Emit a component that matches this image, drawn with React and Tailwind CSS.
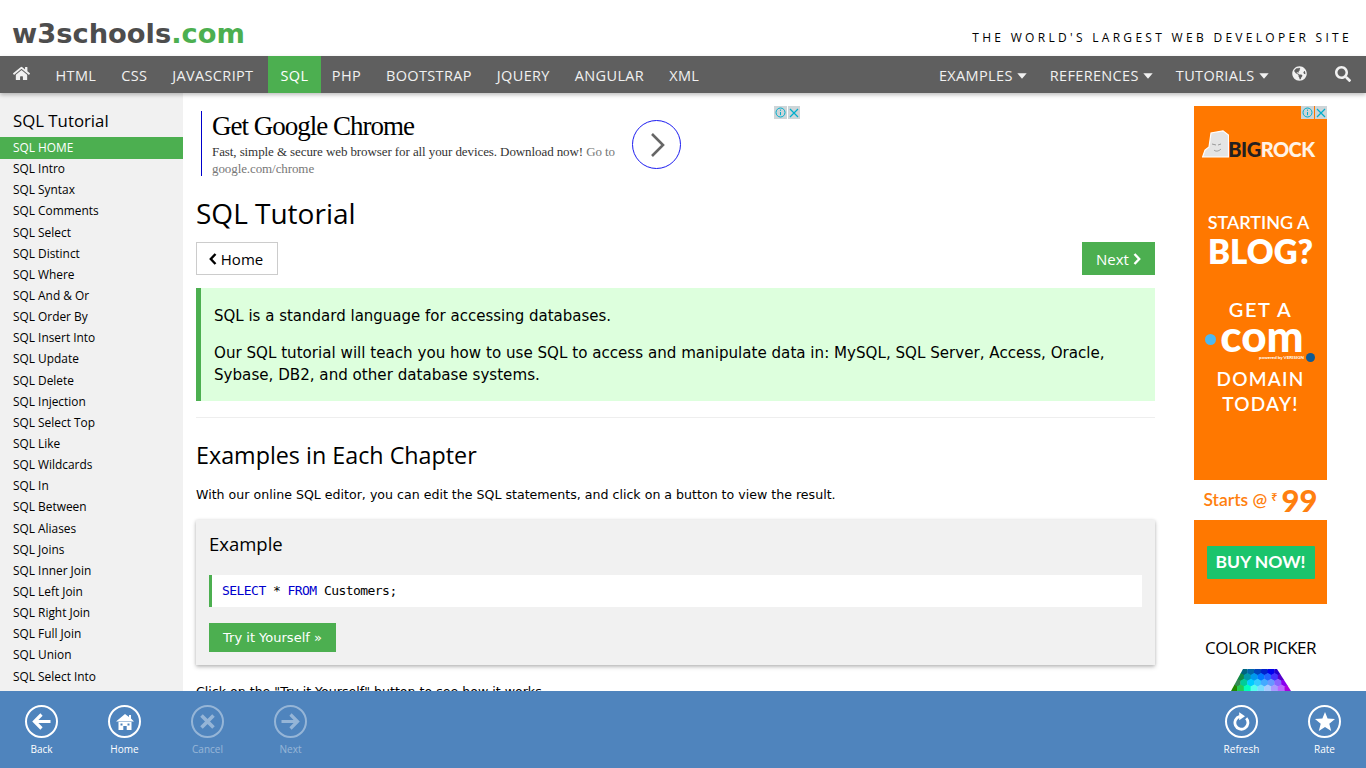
import React from "react";
import { FaHome, FaGlobeAmericas, FaSearch } from "react-icons/fa";

const SEGOE = "font-['Open_Sans','Noto_Sans',sans-serif]";
const VERDANA = "font-['DejaVu_Sans',sans-serif]";

const navLeft = ["HTML", "CSS", "JAVASCRIPT", "SQL", "PHP", "BOOTSTRAP", "JQUERY", "ANGULAR", "XML"];
const navRight = ["EXAMPLES", "REFERENCES", "TUTORIALS"];
const side = ["SQL HOME","SQL Intro","SQL Syntax","SQL Comments","SQL Select","SQL Distinct","SQL Where","SQL And & Or","SQL Order By","SQL Insert Into","SQL Update","SQL Delete","SQL Injection","SQL Select Top","SQL Like","SQL Wildcards","SQL In","SQL Between","SQL Aliases","SQL Joins","SQL Inner Join","SQL Left Join","SQL Right Join","SQL Full Join","SQL Union","SQL Select Into"];

function AdBadge() {
  return (
    <div className="flex h-[13px] gap-px">
      <div className="flex w-[13px] items-center justify-center bg-[#cdd5d8]">
        <svg width="11" height="11" viewBox="0 0 11 11" fill="none" stroke="#00aecd" strokeWidth="1">
          <circle cx="5.5" cy="5.5" r="4.5" /><path d="M5.5 5v3.2M5.5 2.6v1.2" />
        </svg>
      </div>
      <div className="flex w-[12px] items-center justify-center bg-[#cdd5d8]">
        <svg width="10" height="10" viewBox="0 0 10 10" fill="none" stroke="#00aecd" strokeWidth="1.2">
          <path d="M1 1l8 8M9 1l-8 8" />
        </svg>
      </div>
    </div>
  );
}

function ColorWheel() {
  const cells = [];
  const colors = [
    ["#006680","#0066aa","#0044bb","#0022cc","#0000ee","#2200cc"],
    ["#118844","#0099aa","#0099ee","#0077ff","#2266ff","#4433ff","#5500cc"],
    ["#338855","#00cc99","#00ccff","#33ccff","#44aaff","#6699ff","#8866ff","#8800ee"],
    ["#228800","#22cc55","#00ffbb","#55ffee","#77ddff","#aaccff","#aa99ff","#bb66ff","#aa00dd"],
  ];
  colors.forEach((row, r) => {
    const x0 = 30 - (row.length * 6.8) / 2;
    row.forEach((c, i) => {
      const cx = x0 + i * 6.8 + 3.4;
      const cy = r * 5.7 + 2.5;
      const pts = [[0,-4.2],[3.6,-2.1],[3.6,2.1],[0,4.2],[-3.6,2.1],[-3.6,-2.1]].map(([a,b]) => (cx+a)+","+(cy+b)).join(" ");
      cells.push(<polygon key={r + "-" + i} points={pts} fill={c} />);
    });
  });
  return (
    <svg width="60" height="22" viewBox="0 0 60 22" className="block">
      <defs><clipPath id="wheel"><path d="M12 0H46L60 22H0Z" /></clipPath></defs>
      <g clipPath="url(#wheel)">{cells}</g>
    </svg>
  );
}

function RockLogo() {
  return (
    <div className="flex items-end justify-center pt-[11px] pr-[4px]">
      <svg width="27" height="28" viewBox="0 0 27 28" className="mb-[1px] mr-[-1px]">
        <path d="M0.6 27L3 20L7 17L9 3L21 0.8L26.5 5V27Z" fill="#e4e4e4" stroke="#fff" strokeWidth="1.2" />
        <path d="M10 14l4 1M16 15l3-1M12 20c2 2 5 1 7-1" fill="none" stroke="#888" strokeWidth="0.8" />
      </svg>
      <div className="mb-[-2px] flex text-[20px] leading-[24px] font-black tracking-[-0.5px] font-['Lato',sans-serif]">
        <span className="text-[#231f20]">BIG</span>
        <span className="text-[#fff3e6]">ROCK</span>
      </div>
    </div>
  );
}

function OrangeAd() {
  return (
    <div className="w-[133px] font-['Lato',sans-serif]">
      <div className="h-[374px] bg-[#ff7800] text-white">
        <div className="flex justify-end"><AdBadge /></div>
        <RockLogo />
        <div className="mt-[52px] pr-[4px] text-center text-[18px] leading-[22px] font-semibold">STARTING A</div>
        <div className="mt-px text-center text-[33px] leading-[34px] font-extrabold">BLOG?</div>
        <div className="mt-[29px] text-center text-[20px] leading-[24px] font-semibold tracking-[1.6px]">GET A</div>
        <div className="relative flex h-[32px] items-center justify-center pl-[3px]">
          <span className="absolute left-[11px] top-[13px] h-[11px] w-[11px] rounded-full bg-[#4db8f0]"></span>
          <span className="pb-[4px] text-[44px] leading-[28px] font-black">com</span>
        </div>
        <div className="flex items-center justify-end gap-[2px] pr-[12px] text-[4.5px] leading-[9px] font-bold">
          powered by VERISIGN
          <span className="h-[9px] w-[9px] rounded-full bg-[#0f5a94]"></span>
        </div>
        <div className="mt-[4px] text-center text-[19px] leading-[25px] font-semibold tracking-[1.2px]">DOMAIN<br />TODAY!</div>
      </div>
      <div className="flex h-[40px] items-center justify-center gap-[4px] text-[#ff7f0f]">
        <span className="text-[17.5px] font-semibold">Starts @</span>
        <span className="mb-[6px] text-[11px] font-semibold font-['Noto_Sans',sans-serif]">₹</span>
        <span className="text-[31px] leading-[30px] font-black">99</span>
      </div>
      <div className="flex h-[84px] items-center justify-center bg-[#ff7800]">
        <div className="flex h-[33px] w-[108px] items-center justify-center rounded-[1px] bg-[#1bc46c] text-[17.5px] font-bold text-white">BUY NOW!</div>
      </div>
    </div>
  );
}

function CircleBtn({ label, icon, off }) {
  return (
    <div className={"flex w-[83px] flex-col items-center " + (off ? "opacity-40" : "")}>
      <div className="flex h-[33px] w-[33px] items-center justify-center rounded-full border-2 border-white text-white">{icon}</div>
      <div className="mt-[4px] text-[10px] leading-[14px] text-white">{label}</div>
    </div>
  );
}

const Caret = <svg width="10" height="6" viewBox="0 0 10 6" fill="currentColor"><path d="M0.3 0.3h9.4L5 5.7Z" /></svg>;
const ChevL = <svg width="8" height="12" viewBox="0 0 8 12" fill="none" stroke="currentColor" strokeWidth="2.4"><path d="M6.5 1L1.8 6l4.7 5" /></svg>;
const ChevR = <svg width="8" height="12" viewBox="0 0 8 12" fill="none" stroke="currentColor" strokeWidth="2.4"><path d="M1.5 1l4.7 5-4.7 5" /></svg>;
const IconBack = <svg width="19" height="17" viewBox="0 0 19 17" fill="none" stroke="#fff" strokeWidth="3.2"><path d="M18.5 8.5H3M9.5 1.5L2.5 8.5l7 7" /></svg>;
const IconNext = <svg width="19" height="17" viewBox="0 0 19 17" fill="none" stroke="#fff" strokeWidth="3.2"><path d="M0.5 8.5H16M9.5 1.5l7 7-7 7" /></svg>;
const IconCancel = <svg width="15" height="15" viewBox="0 0 15 15" fill="none" stroke="#fff" strokeWidth="3.6"><path d="M1.5 1.5l12 12M13.5 1.5l-12 12" /></svg>;
const IconHome = <svg width="18" height="16" viewBox="0 0 18 16" fill="#fff"><path d="M9 0L13 3V1h2v3.6L18 7.5H0Z" /><path fillRule="evenodd" d="M2.5 8h13v8h-4.8v-4H7.3v4H2.5ZM4.5 9.5v2h2v-2ZM11.5 9.5v2h2v-2Z" /></svg>;
const IconRefresh = <svg width="17" height="19" viewBox="0 0 17 19" fill="none" stroke="#fff" strokeWidth="2.8"><path d="M13.2 6.3A6.5 6.5 0 1 1 6.8 4.4" /><path d="M6.2 0.2L12 4.3l-5.8 3.9Z" fill="#fff" strokeWidth="0" /></svg>;
const IconStar = <svg width="20" height="19" viewBox="0 0 20 19" fill="#fff"><path d="M10 0l2.6 6.6 7.4.5-5.7 4.6 1.9 7.3L10 15l-6.2 4 1.9-7.3L0 7.1l7.4-.5Z" /></svg>;

export default function App() {
  return (
    <div className={"flex h-[768px] w-full flex-col overflow-hidden bg-white text-black " + SEGOE}>
      <header className="flex h-[56px] shrink-0 items-end justify-between pl-[12px] pr-[14px]">
        <div className="mb-[2px] text-[27.3px] leading-[40px] font-bold font-['DejaVu_Sans',sans-serif] text-[#4d4d4d]">
          w3schools<span className="text-[#4caf50]">.com</span>
        </div>
        <div className="mb-[10px] text-[12px] leading-[16px] tracking-[3.3px] text-black">THE WORLD'S LARGEST WEB DEVELOPER SITE</div>
      </header>

      <nav className="relative z-10 flex h-[37px] shrink-0 items-center justify-between bg-[#5f5f5f] text-[14.5px] tracking-[0.35px] text-[#f1f1f1] shadow-[0_2px_4px_rgba(0,0,0,0.25)]">
        <div className="flex h-full items-center">
          <div className="flex h-full w-[43px] items-center justify-center pb-[3px]"><FaHome size={17} /></div>
          {navLeft.map((n) => (
            <div key={n} className={"flex h-full items-center px-[12.5px] pt-[2px] " + (n === "SQL" ? "ml-[2px] mr-[-1.5px] bg-[#4caf50] text-white" : "")}>{n}</div>
          ))}
        </div>
        <div className="flex h-full items-center pr-[15px]">
          {navRight.map((n) => (
            <div key={n} className="flex h-full items-center gap-[4px] px-[11.5px] pt-[2px]">{n}{Caret}</div>
          ))}
          <div className="flex h-full w-[39px] items-center justify-center pb-[3px]"><FaGlobeAmericas size={15} /></div>
          <div className="ml-[16px] flex h-full items-center pb-[1px]"><FaSearch size={16} /></div>
        </div>
      </nav>

      <div className="flex min-h-0 flex-1 overflow-hidden">
        <aside className="w-[183px] shrink-0 bg-[#f1f1f1] pt-[15px]">
          <div className="h-[29.4px] pl-[13px] text-[16.8px] leading-[26px]">SQL Tutorial</div>
          {side.map((s, i) => (
            <div key={s} className={"flex h-[21.15px] items-center pl-[13px] text-[11.9px] " + (i === 0 ? "bg-[#4caf50] text-white" : "text-black")}>{s}</div>
          ))}
        </aside>

        <main className="w-[972px] shrink-0 pl-[13px] pt-[13px]">
          <div className="flex h-[83px] w-[605px] flex-col">
            <div className="flex">
              <div className="mt-[5px] flex h-[65px] w-[578px] shrink-0">
                <div className="ml-[5px] w-px bg-[#0000cc]"></div>
                <div className="ml-[10px] w-[410px] font-['Liberation_Serif',serif]">
                  <div className="text-[27px] leading-[30px] tracking-[-1px]">Get Google Chrome</div>
                  <div className="mt-[3px] text-[13px] leading-[16.5px] tracking-[-0.09px] text-[#333]">Fast, simple & secure web browser for all your devices. Download now! <span className="text-[#777]">Go to google.com/chrome</span></div>
                </div>
                <div className="ml-[10px] mt-[9px] flex h-[49px] w-[49px] items-center justify-center rounded-full border border-[#1c1cf0] pl-[3px]">
                  <svg width="16" height="26" viewBox="0 0 16 26" fill="none" stroke="#666" strokeWidth="2.6"><path d="M2 2l11 11L2 24" /></svg>
                </div>
              </div>
              <AdBadge />
            </div>
          </div>

          <div className="w-[959px]">
            <h1 className="mt-[3px] h-[42px] text-[28px] leading-[42px]">SQL Tutorial</h1>
            <div className="mt-[8px] flex justify-between text-[15px]">
              <div className="flex h-[33px] w-[82px] items-center justify-center gap-[4px] border border-[#ccc] pr-[2px] pt-px text-black">{ChevL}Home</div>
              <div className="flex h-[33px] w-[73px] items-center justify-center gap-[4px] bg-[#4caf50] pt-px text-white">Next{ChevR}</div>
            </div>
            <div className={"mt-[13px] h-[113px] border-l-[5px] border-[#4caf50] bg-[#ddffdd] pl-[13px] pr-[10px] pt-[17px] leading-[22px] " + VERDANA}>
              <p className="text-[15px]">SQL is a standard language for accessing databases.</p>
              <p className="mt-[15px] text-[15.12px]">Our SQL tutorial will teach you how to use SQL to access and manipulate data in: MySQL, SQL Server, Access, Oracle, Sybase, DB2, and other database systems.</p>
            </div>
            <hr className="mt-[16px] border-t border-[#eee]" />
            <h2 className="mt-[19px] text-[23.3px] leading-[36px]">Examples in Each Chapter</h2>
            <p className={"mt-[13px] text-[12.6px] leading-[18px] " + VERDANA}>With our online SQL editor, you can edit the SQL statements, and click on a button to view the result.</p>
            <div className="mt-[16px] h-[145px] bg-[#f1f1f1] px-[13px] pt-[9px] shadow-[0_2px_4px_rgba(0,0,0,0.25),0_0_3px_rgba(0,0,0,0.1)]">
              <div className="h-[30px] text-[18.5px] leading-[30px]">Example</div>
              <div className="mt-[16px] flex h-[32px] items-center border-l-[3px] border-[#4caf50] bg-white pl-[10px] text-[13px] font-['DejaVu_Sans_Mono',monospace] tracking-[-0.55px]">
                <span className="text-[#0000cd]">SELECT</span>&nbsp;*&nbsp;<span className="text-[#0000cd]">FROM</span>&nbsp;Customers;
              </div>
              <div className={"mt-[16px] flex h-[29px] w-[127px] items-center justify-center bg-[#4caf50] text-[13px] text-white " + VERDANA}>Try it Yourself »</div>
            </div>
            <p className={"mt-[18px] text-[12.6px] leading-[18px] " + VERDANA}>Click on the "Try it Yourself" button to see how it works.</p>
          </div>
        </main>

        <div className="flex-1 pl-[39px] pt-[13px]">
          <OrangeAd />
          <div className="mt-[32px] w-[133px] text-center text-[17px] leading-[24px] tracking-[-0.5px]">COLOR PICKER</div>
          <div className="mt-[9px] flex w-[133px] justify-center"><ColorWheel /></div>
        </div>
      </div>

      <footer className="flex h-[77px] shrink-0 items-start justify-between bg-[#4f84bd] pt-[14px]">
        <div className="flex">
          <CircleBtn label="Back" icon={IconBack} />
          <CircleBtn label="Home" icon={IconHome} />
          <CircleBtn label="Cancel" off icon={IconCancel} />
          <CircleBtn label="Next" off icon={IconNext} />
        </div>
        <div className="flex">
          <CircleBtn label="Refresh" icon={IconRefresh} />
          <CircleBtn label="Rate" icon={IconStar} />
        </div>
      </footer>
    </div>
  );
}
